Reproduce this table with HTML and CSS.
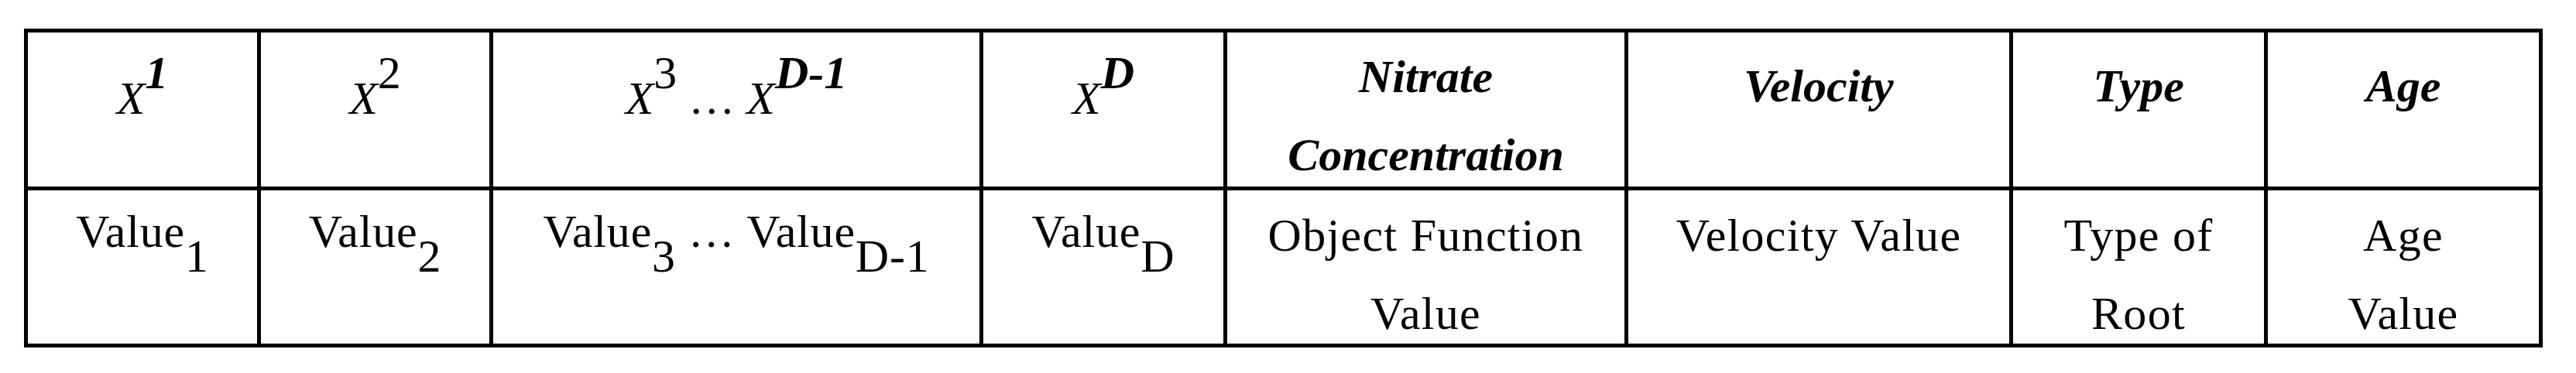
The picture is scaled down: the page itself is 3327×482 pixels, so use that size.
FILE: index.html
```html
<!DOCTYPE html>
<html lang="en">
<head>
<meta charset="utf-8">
<title>Root individual encoding</title>
<link rel="stylesheet" href="styles.css">
</head>
<body>
<div class="page">
  <div class="grid" role="table">
    <div class="cell h-x" role="columnheader"><i>X</i><sup class="bi">1</sup></div>
    <div class="cell h-x" role="columnheader"><i>X</i><sup>2</sup></div>
    <div class="cell h-x" role="columnheader"><i>X</i><sup>3</sup> … <i>X</i><sup class="bi">D-1</sup></div>
    <div class="cell h-x" role="columnheader"><i>X</i><sup class="bi">D</sup></div>
    <div class="cell h-two bi" role="columnheader">Nitrate<br>Concentration</div>
    <div class="cell h-word bi" role="columnheader">Velocity</div>
    <div class="cell h-word bi" role="columnheader">Type</div>
    <div class="cell h-word bi" role="columnheader">Age</div>

    <div class="cell v-sub" role="cell">Value<sub>1</sub></div>
    <div class="cell v-sub" role="cell">Value<sub>2</sub></div>
    <div class="cell v-sub" role="cell">Value<sub>3</sub> … Value<sub>D-1</sub></div>
    <div class="cell v-sub" role="cell">Value<sub>D</sub></div>
    <div class="cell v-text" role="cell">Object Function<br>Value</div>
    <div class="cell v-text" role="cell">Velocity Value</div>
    <div class="cell v-text" role="cell">Type of<br>Root</div>
    <div class="cell v-text" role="cell">Age<br>Value</div>
  </div>
</div>
</body>
</html>
```

FILE: styles.css
```css
html, body {
  margin: 0;
  padding: 0;
  background: #fff;
}

.page {
  padding: 37px 0 0 31px;
  font-family: "Liberation Serif", "Times New Roman", serif;
  font-size: 60px;
  line-height: 101px;
  color: #000;
}

.grid {
  display: grid;
  grid-template-columns: 296px 295px 628px 310px 513px 492px 324px 350px;
  grid-template-rows: 199px 198px;
  gap: 5px;
  padding: 5px;
  background: #000;
  width: max-content;
}

.cell {
  background: #fff;
  text-align: center;
  white-space: nowrap;
}

.bi {
  font-weight: bold;
  font-style: italic;
}

sup, sub {
  font-size: 1em;
  line-height: 0;
  position: static;
}

sup {
  vertical-align: 33px;
}

sub {
  vertical-align: -32px;
}

.h-x { padding-top: 35px; }
.h-two { padding-top: 7px; }
.h-word { padding-top: 19px; }
.v-sub { padding-top: 3px; letter-spacing: 0.8px; }
.v-text { padding-top: 8px; letter-spacing: 1.3px; }
```
